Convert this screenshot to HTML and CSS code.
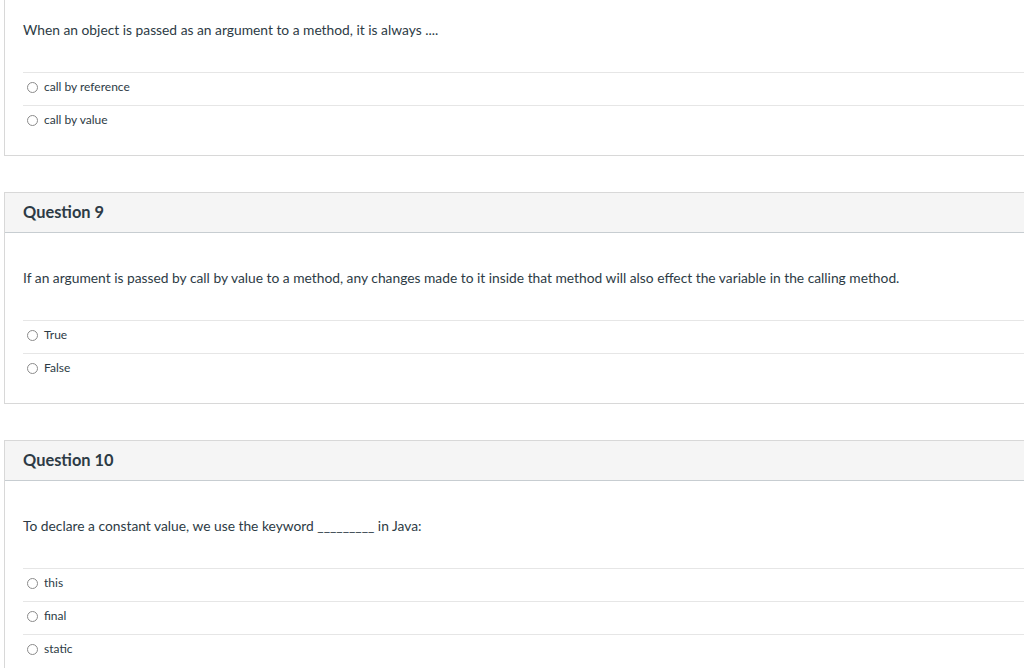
FILE: index.html
```html
<!DOCTYPE html>
<html>
<head>
<meta charset="utf-8">
<link rel="stylesheet" href="styles.css">
</head>
<body>
<div class="page">
  <div class="card first">
    <div class="qtext">When an object is passed as an argument to a method, it is always ....</div>
    <div class="answers">
      <div class="answer"><span class="radio"></span><span>call by reference</span></div>
      <div class="answer"><span class="radio"></span><span>call by value</span></div>
    </div>
  </div>

  <div class="card">
    <div class="header">Question 9</div>
    <div class="qtext">If an argument is passed by call by value to a method, any changes made to it inside that method will also effect the variable in the calling method.</div>
    <div class="answers">
      <div class="answer"><span class="radio"></span><span>True</span></div>
      <div class="answer"><span class="radio"></span><span>False</span></div>
    </div>
  </div>

  <div class="card">
    <div class="header">Question 10</div>
    <div class="qtext">To declare a constant value, we use the keyword _________ in Java:</div>
    <div class="answers">
      <div class="answer"><span class="radio"></span><span>this</span></div>
      <div class="answer"><span class="radio"></span><span>final</span></div>
      <div class="answer"><span class="radio"></span><span>static</span></div>
    </div>
  </div>
</div>
</body>
</html>
```

FILE: styles.css
```css
html, body {
  margin: 0;
  padding: 0;
  background: #ffffff;
  overflow: hidden;
}
body {
  font-family: Lato, "Open Sans", sans-serif;
  color: #2d3b45;
}
.page {
  padding-left: 4px;
  margin-top: -40px;
  width: 1060px;
}
.card {
  border: 1px solid #d8d8d8;
  border-right: none;
  margin-bottom: 36px;
  padding-bottom: 17px;
}
.header {
  background: #f5f5f5;
  border-bottom: 1px solid #c7cdd1;
  height: 37px;
  padding: 0 0 2px 18px;
  font-weight: 700;
  font-size: 16.4px;
  line-height: 37px;
}
.qtext {
  padding: 35px 18px 0;
  font-size: 13.8px;
  line-height: 20px;
  height: 52px;
}
.first .qtext {
  padding-top: 59px;
}
.answers {
  margin-left: 18px;
}
.answer {
  border-top: 1px solid #e6e6e6;
  padding: 5px 0 9px 4px;
  line-height: 18px;
  font-size: 12px;
  display: flex;
  align-items: center;
}
.radio {
  width: 9px;
  height: 9px;
  border: 1px solid #8b8b8b;
  border-radius: 50%;
  margin-right: 6px;
}
```
